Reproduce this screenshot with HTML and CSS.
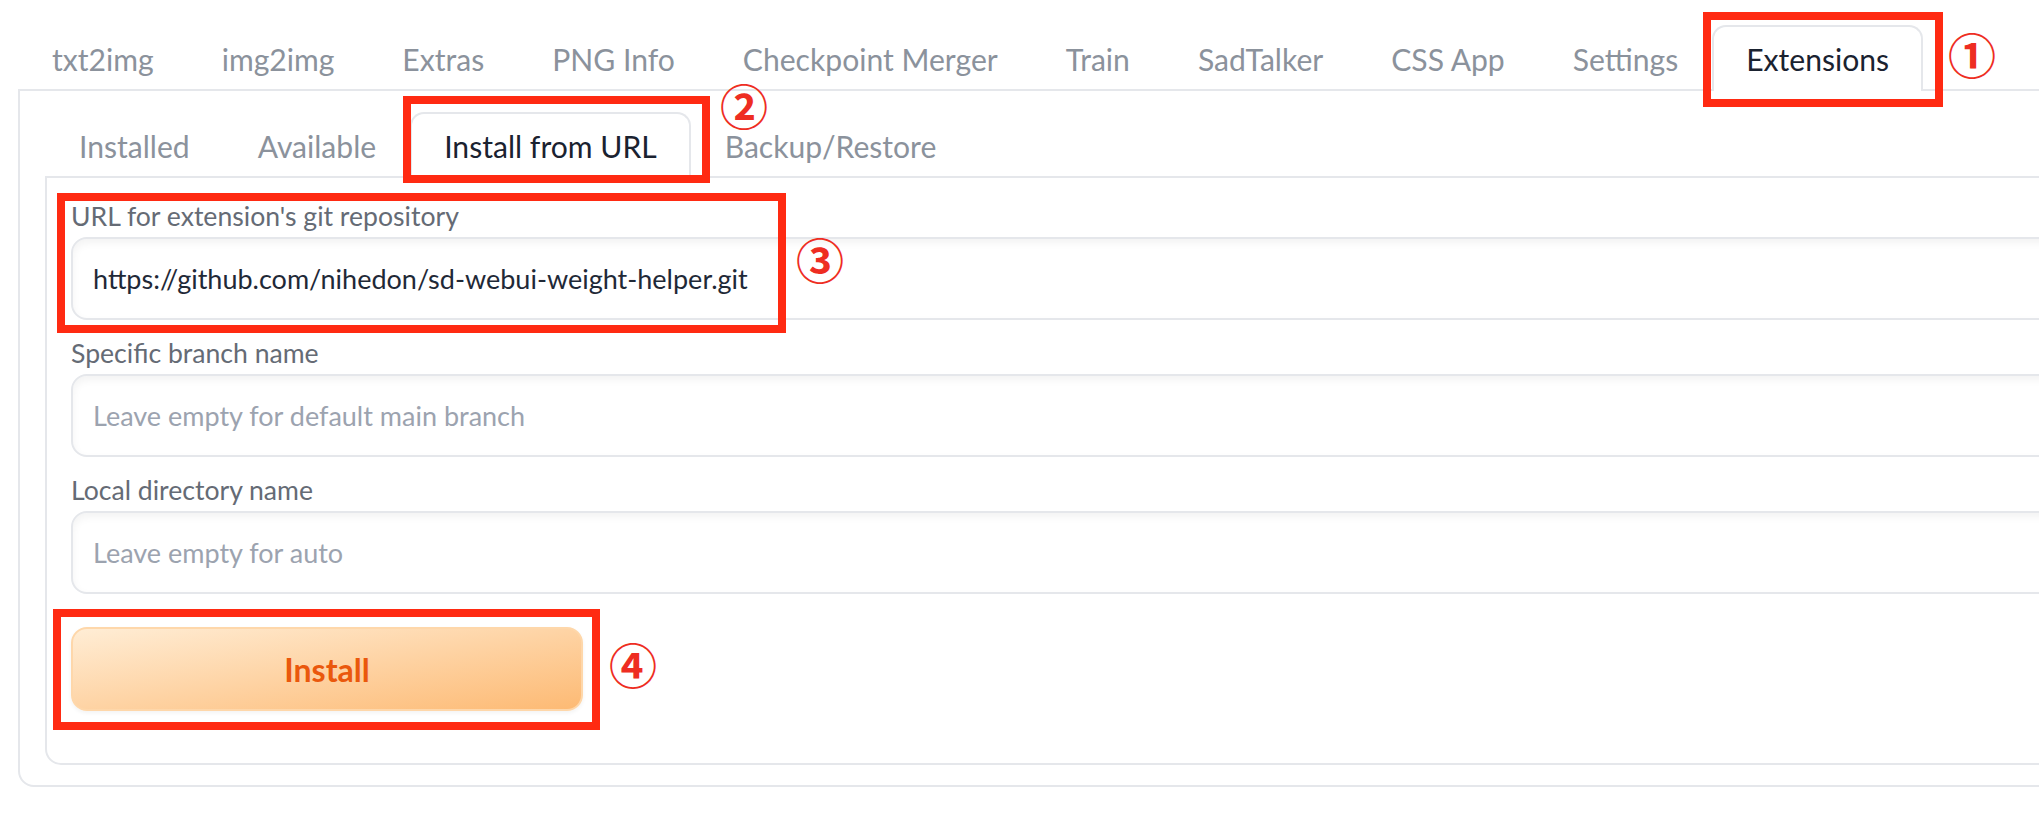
FILE: index.html
```html
<!DOCTYPE html>
<html lang="en">
<head>
<meta charset="utf-8">
<title>Extensions - Install from URL</title>
<link rel="stylesheet" href="styles.css">
</head>
<body>
<div class="app">
  <nav class="tabnav top">
    <button class="tab">txt2img</button>
    <button class="tab">img2img</button>
    <button class="tab">Extras</button>
    <button class="tab">PNG Info</button>
    <button class="tab">Checkpoint Merger</button>
    <button class="tab">Train</button>
    <button class="tab">SadTalker</button>
    <button class="tab">CSS App</button>
    <button class="tab">Settings</button>
    <button class="tab selected">Extensions</button>
  </nav>
  <div class="panel outer">
    <nav class="tabnav sub">
      <button class="tab">Installed</button>
      <button class="tab">Available</button>
      <button class="tab selected">Install from URL</button>
      <button class="tab">Backup/Restore</button>
    </nav>
    <div class="panel inner">
      <label class="field">
        <span class="label">URL for extension's git repository</span>
        <input class="textbox" type="text" value="https://github.com/nihedon/sd-webui-weight-helper.git">
      </label>
      <label class="field">
        <span class="label">Specific branch name</span>
        <input class="textbox" type="text" placeholder="Leave empty for default main branch">
      </label>
      <label class="field">
        <span class="label">Local directory name</span>
        <input class="textbox" type="text" placeholder="Leave empty for auto">
      </label>
      <button class="primary">Install</button>
    </div>
  </div>

  <div class="mark box-1"></div>
  <div class="mark box-2"></div>
  <div class="mark box-3"></div>
  <div class="mark box-4"></div>
  <span class="num num-1">①</span>
  <span class="num num-2">②</span>
  <span class="num num-3">③</span>
  <span class="num num-4">④</span>
</div>
</body>
</html>
```

FILE: styles.css
```css
* { box-sizing: border-box; }

html, body {
  margin: 0;
  padding: 0;
  background: #ffffff;
  overflow: hidden;
}

body {
  font-family: Lato, "Liberation Sans", sans-serif;
  color: #1f2937;
}

.app {
  position: relative;
  margin-right: -120px;
  padding: 25px 0 0 18px;
}

.tabnav {
  display: flex;
  align-items: flex-end;
  height: 64px;
}

.tab {
  position: relative;
  height: 64px;
  padding: 4px 32px 0;
  margin: 0;
  border: 2px solid transparent;
  border-bottom: none;
  background: transparent;
  font-family: inherit;
  font-size: 30.1px;
  line-height: 1.1;
  color: #8b929c;
  white-space: nowrap;
  cursor: pointer;
}

.tab.selected {
  height: 66px;
  margin-bottom: -2px;
  padding-bottom: 2px;
  z-index: 1;
  background: #ffffff;
  border-color: #e5e7eb;
  border-radius: 14px 14px 0 0;
  color: #1a2230;
}

.panel {
  border: 2px solid #e5e7eb;
  background: #ffffff;
}

.panel.outer {
  border-radius: 0 0 0 16px;
  padding: 21px 25px 20px 25px;
}

.panel.inner {
  border-radius: 0 0 0 16px;
  padding: 24px 24px 52px 24px;
  display: flex;
  flex-direction: column;
  align-items: flex-start;
}

.field {
  display: flex;
  flex-direction: column;
  width: 100%;
  margin-bottom: 19px;
}

.field:last-of-type {
  margin-bottom: 0;
}

.label {
  height: 28px;
  line-height: 28px;
  margin-bottom: 7px;
  font-size: 26.6px;
  color: #656b75;
}

.textbox {
  width: 100%;
  height: 83px;
  padding: 0 20px;
  border: 2px solid #e5e7eb;
  border-radius: 16px;
  background: #ffffff;
  box-shadow: inset 0 4px 8px rgba(0, 0, 0, 0.05);
  font-family: inherit;
  font-size: 27px;
  color: #1f2937;
  outline: none;
}

.textbox::placeholder {
  color: #9ca3af;
}

.primary {
  margin-top: 33px;
  width: 512px;
  height: 84px;
  border: 2px solid #fed7aa;
  border-radius: 16px;
  background: linear-gradient(to bottom right, #ffedd5, #fdba74);
  box-shadow: 0 2px 4px rgba(0, 0, 0, 0.05);
  font-family: inherit;
  font-size: 32px;
  font-weight: 700;
  color: #ea580c;
  cursor: pointer;
}

/* annotations */
.mark {
  position: absolute;
  border: 8px solid #ff2a12;
  z-index: 5;
}

.box-1 { left: 1703px; top: 12px; width: 240px; height: 95px; }
.box-2 { left: 403px; top: 96px; width: 307px; height: 87px; }
.box-3 { left: 57px; top: 193px; width: 729px; height: 140px; }
.box-4 { left: 53px; top: 609px; width: 547px; height: 121px; }

.num {
  position: absolute;
  z-index: 6;
  width: 50px;
  height: 42px;
  display: flex;
  align-items: center;
  justify-content: center;
  font-family: "Noto Sans CJK JP", sans-serif;
  font-size: 48px;
  font-weight: 700;
  line-height: 42px;
  color: #ee2d22;
}

.num-1 { left: 1947px; top: 32px; }
.num-2 { left: 719px; top: 83px; }
.num-3 { left: 795px; top: 237px; }
.num-4 { left: 608px; top: 642px; }
```
